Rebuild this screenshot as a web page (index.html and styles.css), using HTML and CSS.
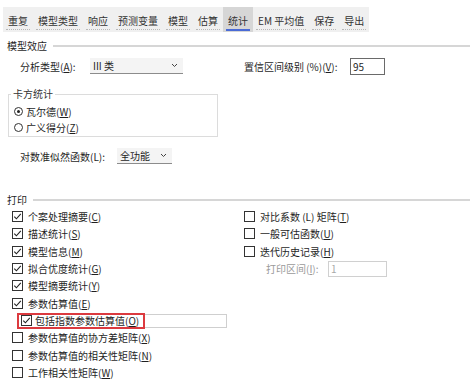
FILE: index.html
```html
<!DOCTYPE html>
<html lang="zh-CN">
<head>
    <meta charset="UTF-8">
    <title>统计</title>
    <link rel="stylesheet" href="styles.css">
</head>
<body>
<div class="tabs">
    <span class="tab"><span>重复</span></span>
    <span class="tab"><span>模型类型</span></span>
    <span class="tab"><span>响应</span></span>
    <span class="tab"><span>预测变量</span></span>
    <span class="tab"><span>模型</span></span>
    <span class="tab"><span>估算</span></span>
    <span class="tab active"><span>统计</span></span>
    <span class="tab"><span>EM 平均值</span></span>
    <span class="tab"><span>保存</span></span>
    <span class="tab"><span>导出</span></span>
</div>

<div class="panel">
    <div class="group-title">模型效应</div>
    <div class="effect-row">
        <div class="field field-analysis">
            <span class="label-analysis">分析类型(<u>A</u>):</span>
            <div class="select select-type">
                <span>III 类</span>
                <svg class="chev" width="7" height="5" viewBox="0 0 7 5"><polyline points="1,1 3.5,3.5 6,1" fill="none" stroke="#444" stroke-width="1"/></svg>
            </div>
        </div>
        <div class="field">
            <span class="label-conf">置信区间级别 (%)(<u>V</u>):</span>
            <div class="input">95</div>
        </div>
    </div>

    <fieldset class="chi-box">
        <legend>卡方统计</legend>
        <div class="radio-row first"><span class="radio checked"></span>瓦尔德(<u>W</u>)</div>
        <div class="radio-row"><span class="radio"></span>广义得分(<u>Z</u>)</div>
    </fieldset>

    <div class="field ll-row">
        <span class="label-ll">对数准似然函数(L):</span>
        <div class="select select-ll">
            <span>全功能</span>
            <svg class="chev" width="7" height="5" viewBox="0 0 7 5"><polyline points="1,1 3.5,3.5 6,1" fill="none" stroke="#444" stroke-width="1"/></svg>
        </div>
    </div>

    <div class="group-title print-title">打印</div>
    <div class="print-grid">
        <div class="col-left">
            <div class="check-row"><span class="box on"></span>个案处理摘要(<u>C</u>)</div>
            <div class="check-row"><span class="box on"></span>描述统计(<u>S</u>)</div>
            <div class="check-row"><span class="box on"></span>模型信息(<u>M</u>)</div>
            <div class="check-row"><span class="box on"></span>拟合优度统计(<u>G</u>)</div>
            <div class="check-row"><span class="box on"></span>模型摘要统计(<u>Y</u>)</div>
            <div class="check-row"><span class="box on"></span>参数估算值(<u>E</u>)</div>
            <div class="check-row">
                <div class="focus">
                    <div class="highlight"><span class="box on"></span>包括指数参数估算值(<u>O</u>)</div>
                </div>
            </div>
            <div class="check-row"><span class="box"></span>参数估算值的协方差矩阵(<u>X</u>)</div>
            <div class="check-row"><span class="box"></span>参数估算值的相关性矩阵(<u>N</u>)</div>
            <div class="check-row"><span class="box"></span>工作相关性矩阵(<u>W</u>)</div>
        </div>
        <div class="col-right">
            <div class="check-row"><span class="box"></span>对比系数 (L) 矩阵(<u>T</u>)</div>
            <div class="check-row"><span class="box"></span>一般可估函数(<u>U</u>)</div>
            <div class="check-row"><span class="box"></span>迭代历史记录(<u>H</u>)</div>
            <div class="check-row interval">
                <span class="label-interval">打印区间(<u>I</u>):</span>
                <div class="input disabled">1</div>
            </div>
        </div>
    </div>
</div>
</body>
</html>
```

FILE: styles.css
```css
body {
    margin: 0;
    font-family: "Noto Sans CJK SC", "Noto Sans", sans-serif;
    font-size: 10px;
    color: #1f1f1f;
    background-color: #ffffff;
}

u {
    text-decoration: underline;
    text-underline-offset: 1px;
}

/* onglets */
.tabs {
    display: flex;
    width: fit-content;
    height: 25px;
    margin: 7px 0 0 3px;
    background-color: #f0f0f0;
}

.tab {
    padding: 7px 3px 0;
    color: #333;
}

.tab span {
    display: block;
    line-height: 14px;
    padding: 0 2px 1px;
    border-bottom: 1px dotted #b8b8b8;
}

.tab.active {
    background-color: #d6d6d6;
}

.tab.active span {
    padding-bottom: 1px;
    border-bottom: 2px solid #4a6bd6;
}

.panel {
    padding: 0 4px 0 7px;
}

.group-title {
    display: flex;
    align-items: center;
    height: 12px;
    line-height: 12px;
    margin-top: 8px;
}

.group-title::after {
    content: "";
    flex: 1;
    margin-left: 6px;
    border-top: 2px solid #d6d6d6;
}

.field {
    display: flex;
    align-items: center;
    height: 16px;
}

.effect-row {
    display: grid;
    grid-template-columns: 237px auto;
    margin-top: 6px;
}

.field-analysis {
    padding-left: 13px;
}

.label-analysis {
    width: 70px;
}

.label-conf {
    width: 106px;
}

.select {
    display: flex;
    align-items: center;
    justify-content: space-between;
    box-sizing: border-box;
    height: 16px;
    padding: 0 5px 0 3px;
    background-color: #f4f4f4;
    border-bottom: 1px solid #8c8c8c;
}

.select-type {
    width: 93px;
}

.select-ll {
    width: 55px;
}

.input {
    box-sizing: border-box;
    width: 35px;
    height: 17px;
    line-height: 15px;
    padding-left: 2px;
    border: 1px solid #6a6a6a;
    background-color: #fff;
}

.input.disabled {
    width: 59px;
    height: 16px;
    line-height: 14px;
    border-color: #d0d0d0;
    color: #a8a8a8;
}

/* groupe chi carre */
.chi-box {
    box-sizing: border-box;
    width: 210px;
    margin: 14px 0 0 1px;
    padding: 0 0 1px 2px;
    border: 1px solid #dcdcdc;
}

.chi-box legend {
    padding: 0 2px;
    line-height: 12px;
    color: #333;
}

.radio-row {
    display: flex;
    align-items: center;
    height: 16px;
    padding-left: 3px;
}

.radio-row.first {
    margin-top: 3px;
}

.radio {
    display: flex;
    align-items: center;
    justify-content: center;
    box-sizing: border-box;
    width: 9px;
    height: 9px;
    margin-right: 3px;
    border: 1px solid #333;
    border-radius: 50%;
}

.radio.checked::after {
    content: "";
    width: 3px;
    height: 3px;
    border-radius: 50%;
    background-color: #222;
}

.ll-row {
    margin-top: 11px;
    padding-left: 13px;
}

.label-ll {
    width: 97px;
}

.print-title {
    margin-top: 30px;
}

/* options d'impression */
.print-grid {
    display: grid;
    grid-template-columns: 237px auto;
    margin-top: 2px;
}

.col-left {
    padding-left: 5px;
}

.check-row {
    display: flex;
    align-items: center;
    height: 17.33px;
}

.box {
    display: inline-block;
    flex: none;
    box-sizing: border-box;
    width: 11px;
    height: 11px;
    margin-right: 5px;
    border: 1px solid #333;
    background-color: #fff;
}

.box.on {
    background: #fff url("data:image/svg+xml,%3Csvg xmlns='http://www.w3.org/2000/svg' viewBox='0 0 9 9'%3E%3Cpolyline points='1.3,4.6 3.4,6.8 7.8,1.8' fill='none' stroke='%23222' stroke-width='1.1'/%3E%3C/svg%3E") center / 9px 9px no-repeat;
}

.focus {
    display: flex;
    align-items: center;
    box-sizing: border-box;
    width: 210px;
    height: 14px;
    margin-left: 5px;
    border: 1px solid #cfcfcf;
}

.highlight {
    display: flex;
    align-items: center;
    box-sizing: border-box;
    width: 128px;
    height: 16px;
    margin-left: -1px;
    padding-left: 2px;
    border: 2px solid #dc3a3f;
}

.highlight .box {
    margin-right: 3px;
}

.interval {
    padding-left: 22px;
}

.label-interval {
    width: 62px;
    color: #9a9a9a;
}
```
